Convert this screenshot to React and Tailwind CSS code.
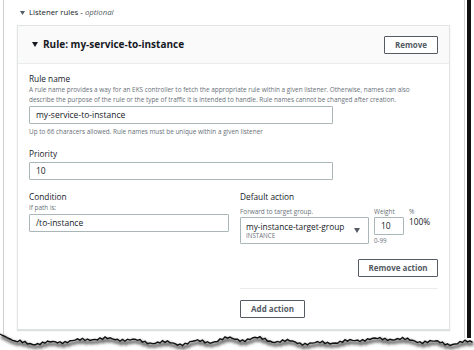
import React from 'react';

const Caret = ({ className }) => (
  <svg viewBox="0 0 10 8" className={className} fill="currentColor">
    <path d="M0 0 L10 0 L5 8 Z" />
  </svg>
);

// jagged "torn paper" line along the bottom of the screenshot
const tornPoints = () => {
  const pts = [];
  for (let x = 0; x <= 474; x += 2.5) {
    const y =
      10 +
      2.2 * Math.sin(x * 0.045) +
      1.4 * Math.sin(x * 0.21 + 1) +
      1.0 * Math.sin(x * 1.1 + 2) +
      0.6 * Math.sin(x * 2.7);
    pts.push([x, x < 14 ? 3 + x * 0.5 : y]);
  }
  return pts;
};

const TornEdge = () => {
  const pts = tornPoints();
  const line = pts.map(([x, y], i) => `${i ? 'L' : 'M'}${x} ${y.toFixed(1)}`).join(' ');
  const below = `${line} L474 30 L0 30 Z`;
  return (
    <svg width="474" height="26" viewBox="0 0 474 26" className="block relative -mt-[7px]">
      <defs>
        <filter id="blur" x="-5%" y="-50%" width="110%" height="200%">
          <feGaussianBlur stdDeviation="1.5" />
        </filter>
      </defs>
      <path d={below} fill="#ffffff" />
      <path d={line} transform="translate(1 2.5)" stroke="#000" strokeWidth="3.2" fill="none" opacity="0.6" filter="url(#blur)" />
      <path d={line} stroke="#111" strokeWidth="1.4" fill="none" />
    </svg>
  );
};

const Input = ({ value, className }) => (
  <div className={`h-[18px] border border-[#aab7b8] rounded-[1px] bg-white flex items-center px-[6px] text-[8.5px] text-[#16191f] ${className}`}>
    {value}
  </div>
);

const Button = ({ children, className }) => (
  <div className={`h-[18px] border border-[#545b64] rounded-[1px] bg-white flex items-center justify-center text-[8px] font-bold text-[#545b64] ${className}`}>
    {children}
  </div>
);

export default function App() {
  return (
    <div className="w-[474px] h-[350px] bg-white overflow-hidden font-['Open_Sans',sans-serif]">
      <div className="ml-[3px] w-[468px] h-[338px] border-l border-[#cfcfcf] border-r-[4px] border-r-[#111]">
        <div className="mr-[2px] h-full border-r border-[#d6d6d6]">
          {/* section header */}
          <div className="flex items-center gap-[4px] pl-[16px] pt-[8px] h-[18px] text-[7.8px] text-[#16191f]">
            <Caret className="w-[5px] h-[4px] text-[#545b64]" />
            <span>
              Listener rules - <i className="text-[#545b64]">optional</i>
            </span>
          </div>

          {/* rule card */}
          <div className="ml-[13px] mt-[7px] w-[433px] h-[305px] border border-[#e1e4e4] shadow-[0_1px_1px_rgba(0,28,36,0.15)]">
            <div className="h-[38px] bg-[#fafafa] border-b border-[#eaeded] flex items-center pl-[14px] pr-[11px]">
              <Caret className="w-[6px] h-[5px] text-[#16191f]" />
              <span className="ml-[5px] text-[10px] font-bold text-[#16191f]">
                Rule: my-service-to-instance
              </span>
              <Button className="ml-auto w-[54px]">Remove</Button>
            </div>

            <div className="px-[11px] pt-[9px]">
              <div className="text-[8.3px] leading-[12px] text-[#16191f]">Rule name</div>
              <div className="text-[6.4px] leading-[9.5px] text-[#687078]">
                A rule name provides a way for an EKS controller to fetch the appropriate rule within a given listener. Otherwise, names can also
                <br />
                describe the purpose of the rule or the type of traffic it is intended to handle. Rule names cannot be changed after creation.
              </div>
              <Input value="my-service-to-instance" className="w-[304px] mt-[2px]" />
              <div className="mt-[3px] text-[6.4px] leading-[9px] text-[#687078]">
                Up to 66 characers allowed. Rule names must be unique within a given listener
              </div>

              <div className="mt-[12px] text-[8.3px] leading-[12px] text-[#16191f]">Priority</div>
              <Input value="10" className="w-[304px] mt-[2px]" />

              <div className="mt-[11px] flex gap-[11px]">
                <div className="w-[200px]">
                  <div className="text-[8.3px] leading-[12px] text-[#16191f]">Condition</div>
                  <div className="text-[6.4px] leading-[9px] text-[#687078]">If path is:</div>
                  <Input value="/to-instance" className="w-[200px] mt-[2px]" />
                </div>

                <div className="w-[199px]">
                  <div className="text-[8.3px] leading-[12px] text-[#16191f]">Default action</div>
                  <div className="flex mt-[4px]">
                    <div className="w-[129px]">
                      <div className="text-[6.4px] leading-[9px] text-[#687078]">Forward to target group.</div>
                      <div className="mt-[1px] h-[27px] border border-[#aab7b8] rounded-[1px] flex items-center pl-[5px] pr-[8px]">
                        <div className="flex-1">
                          <div className="text-[8.3px] leading-[11px] text-[#16191f]">my-instance-target-group</div>
                          <div className="text-[6.2px] leading-[8px] text-[#687078]">INSTANCE</div>
                        </div>
                        <Caret className="w-[6px] h-[5px] text-[#545b64]" />
                      </div>
                    </div>
                    <div className="ml-[5px] w-[30px]">
                      <div className="text-[6.4px] leading-[9px] text-[#687078]">Weight</div>
                      <Input value="10" className="mt-[1px] w-[30px]" />
                      <div className="mt-[2px] text-[6.2px] leading-[8px] text-[#687078]">0-99</div>
                    </div>
                    <div className="ml-[5px]">
                      <div className="text-[6.4px] leading-[9px] text-[#687078]">%</div>
                      <div className="text-[8.3px] leading-[12px] text-[#16191f]">100%</div>
                    </div>
                  </div>
                  <div className="flex justify-end mt-[14px]">
                    <Button className="w-[80px]">Remove action</Button>
                  </div>
                  <div className="mt-[11px] border-t border-[#eaeded]" />
                  <Button className="mt-[11px] w-[65px]">Add action</Button>
                </div>
              </div>
            </div>
          </div>
        </div>
      </div>
      <TornEdge />
    </div>
  );
}
